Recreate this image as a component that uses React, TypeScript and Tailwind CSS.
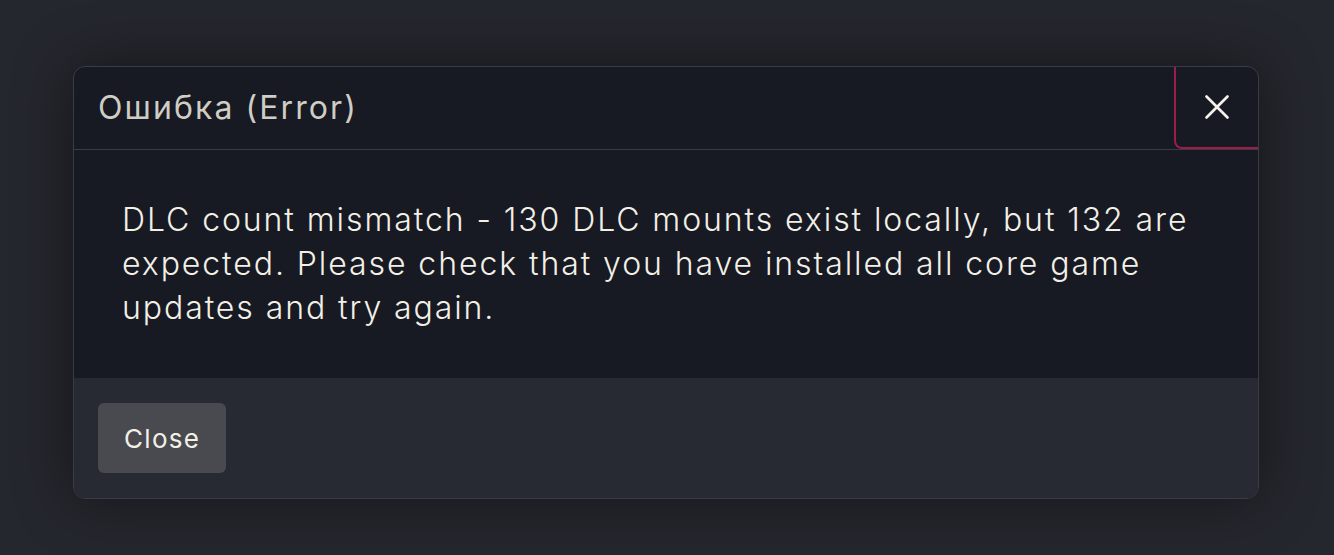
import React from 'react';

const App: React.FC = () => {
  return (
    <div
      className="min-h-[555px] w-full bg-[#25272e] pt-[66px]"
      style={{ fontFamily: 'Inter, "Noto Sans", sans-serif' }}
    >
      <div className="ml-[73px] w-[1186px] overflow-hidden rounded-xl border border-[#3a3c45] bg-[#171923] shadow-[0_0_60px_rgba(0,0,0,0.45)]">
        {/* header */}
        <div className="flex h-[83px] items-stretch border-b border-[#3a3c45]">
          <h5 className="flex flex-1 items-center pl-6 text-[32px] font-normal tracking-[0.065em] text-[#cfcdc4]">
            Ошибка (Error)
          </h5>
          <button className="flex w-[84px] items-center justify-center rounded-bl-lg border-b-2 border-l-2 border-b-[#9a1d4a] border-l-[#9a1d4a] text-[#f4f2ea]">
            <svg width="28" height="28" viewBox="0 0 24 24" fill="none" stroke="currentColor" strokeWidth="2.3" strokeLinecap="round">
              <path d="M3 3l18 18M21 3L3 21" />
            </svg>
          </button>
        </div>

        {/* body */}
        <div className="px-12 pt-12 pb-12">
          <p className="text-[32px] font-light leading-[44px] tracking-[0.06em] text-[#f2f0e6]">
            DLC count mismatch - 130 DLC mounts exist locally, but 132 are expected. Please check that you have installed all core game updates and try again.
          </p>
        </div>

        {/* footer */}
        <div className="flex bg-[#282a33] px-6 py-[25px]">
          <button className="h-[70px] rounded-md bg-[#494a50] px-[26px] text-[26px] tracking-[0.05em] text-[#f2f0e6]">
            Close
          </button>
        </div>
      </div>
    </div>
  );
};

export default App;
